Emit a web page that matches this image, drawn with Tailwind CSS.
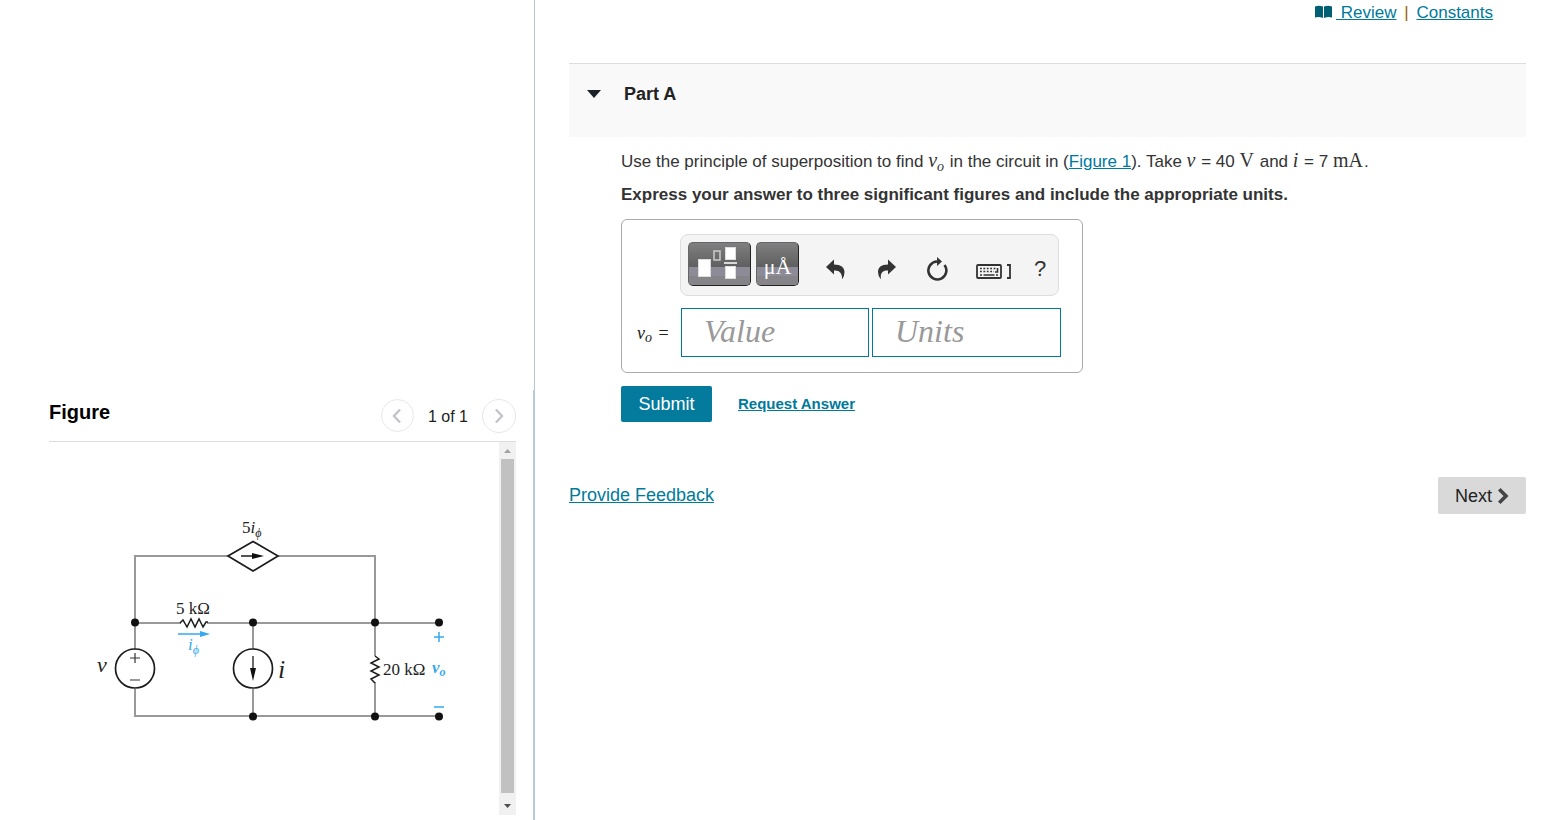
<!DOCTYPE html>
<html lang="en">
<head>
    <meta charset="UTF-8">
    <meta name="viewport" content="width=device-width, initial-scale=1.0">
    <title>Part A</title>
    <script src="https://cdn.jsdelivr.net/npm/@tailwindcss/browser@4"></script>
</head>
<body class="bg-white text-[#333] text-[17px] leading-6 font-['Liberation_Sans',Arial,sans-serif]">
    <div class="grid grid-cols-[535px_1fr] min-h-screen">

        <!-- Left column: figure viewer -->
        <aside class="flex flex-col h-screen">
            <div class="h-[390px] shrink-0 border-r border-[#b9c8d3]"></div>
            <section class="flex-1 min-h-0 flex flex-col border-r-2 border-[#b9cadb] pl-[49px] pr-[17px] pb-[5px]">
                <header class="h-[52px] shrink-0 flex items-center justify-between border-b border-[#ddd]">
                    <h2 class="text-[20px] font-bold text-black pb-2">Figure</h2>
                    <div class="flex items-center">
                        <button type="button" aria-label="Previous figure" class="size-[33px] rounded-full border border-[#e8e8e8] flex items-center justify-center pr-0.5">
                            <svg class="size-4" viewBox="0 0 16 16" fill="none" stroke="#c4c4c8" stroke-width="2.4"><path d="M11 1.5 5 8l6 6.5"/></svg>
                        </button>
                        <span class="w-[68px] text-center text-[16px] pt-0.5 text-[#222]">1 of 1</span>
                        <button type="button" aria-label="Next figure" class="size-[34px] rounded-full border border-[#e8e8e8] flex items-center justify-center">
                            <svg class="size-4" viewBox="0 0 16 16" fill="none" stroke="#c4c4c8" stroke-width="2.4"><path d="M5 1.5 11 8l-6 6.5"/></svg>
                        </button>
                    </div>
                </header>
                <div class="flex-1 min-h-0 flex">
                    <div class="flex-1 overflow-hidden">
                        <svg class="w-[450px] h-[373px] font-['Liberation_Serif','Times_New_Roman',serif]" viewBox="0 0 450 373" role="img" aria-label="Circuit">
                            <!-- wires -->
                            <g fill="none" stroke="#999" stroke-width="2">
                                <path d="M179 114H86V207M86 247V274H390"/>
                                <path d="M229 114H326V214M326 240V274"/>
                                <path d="M86 181H132M158 181H390"/>
                                <path d="M204 181V207M204 247V274"/>
                            </g>
                            <!-- sources and resistors -->
                            <g fill="none" stroke="#1c1c1c" stroke-width="1.7">
                                <circle cx="86" cy="226.5" r="19.5"/>
                                <circle cx="204" cy="226.5" r="19.5"/>
                                <path d="M179 114 204 99.5 229 114 204 129Z"/>
                                <path d="M131 181l3-3 4 7 4-8 4 8 4-8 4 8 3-5h2" stroke-width="1.5"/>
                                <path d="M326 214l4 3-8 4 8 4-8 4 8 4-8 4 4 4" stroke-width="1.5"/>
                                <path d="M192 114h12M204 214v13" stroke-width="1.3"/>
                            </g>
                            <g stroke="#333" stroke-width="1.2">
                                <path d="M81 216h10M86 211v10M81 238h10"/>
                            </g>
                            <g fill="#111">
                                <path d="M203 111 215 114 203 117Z"/>
                                <path d="M201 226h6L204 239Z"/>
                                <circle cx="86" cy="180.5" r="4"/>
                                <circle cx="204" cy="180.5" r="4"/>
                                <circle cx="326" cy="180.5" r="4"/>
                                <circle cx="390" cy="180.5" r="4"/>
                                <circle cx="204" cy="274.5" r="4"/>
                                <circle cx="326" cy="274.5" r="4"/>
                                <circle cx="390" cy="274.5" r="4"/>
                            </g>
                            <g stroke="#34a9ee" stroke-width="1.5">
                                <path d="M129 192h24M385 195h10M390 190v10M385 265h10"/>
                                <path d="M151 189 161 192 151 195Z" fill="#34a9ee" stroke="none"/>
                            </g>
                            <!-- labels -->
                            <g fill="#222" font-size="17">
                                <text x="193" y="91">5<tspan font-style="italic">i</tspan><tspan font-style="italic" font-size="12" dy="4">ϕ</tspan></text>
                                <text x="127" y="172">5 kΩ</text>
                                <text x="334" y="233">20 kΩ</text>
                                <text x="48" y="230" font-style="italic" font-size="22">v</text>
                                <text x="229" y="236" font-style="italic" font-size="26">i</text>
                            </g>
                            <g fill="#34a9ee" font-style="italic" font-size="17">
                                <text x="139" y="208">i<tspan font-size="12" dy="4">ϕ</tspan></text>
                                <text x="383" y="231" font-weight="bold">v<tspan font-size="12" dy="3">o</tspan></text>
                            </g>
                        </svg>
                    </div>
                    <!-- scrollbar -->
                    <div class="w-[17px] bg-[#f1f1f1] flex flex-col items-center">
                        <svg class="w-[17px] h-[17px] shrink-0" viewBox="0 0 17 17" fill="#a3a3a3"><path d="M5 11h7L8.5 7Z"/></svg>
                        <div class="w-[13px] flex-1 bg-[#c1c1c1]"></div>
                        <svg class="w-[17px] h-[22px] shrink-0" viewBox="0 0 17 22" fill="#505050"><path d="M5 11h7L8.5 15Z"/></svg>
                    </div>
                </div>
            </section>
        </aside>

        <!-- Right column: question -->
        <main class="pl-[34px] pr-9">
            <nav class="h-[63px] pt-px pr-[33px] flex justify-end items-start text-[#007a9c]">
                <svg class="w-[17px] h-[14px] mt-1 mr-1" viewBox="0 0 17 14" fill="#005f73"><path d="M0 1.5Q4 0 8 1.5V13Q4 11.5 0 12.5ZM9 1.5Q13 0 17 1.5V12.5Q13 11.5 9 13Z"/></svg>
                <a href="#" class="underline whitespace-pre"> Review</a>
                <span class="w-5 text-center text-[#a35f00]">|</span>
                <a href="#" class="underline">Constants</a>
            </nav>

            <header class="h-[74px] bg-[#f9f9f9] border-t border-[#ddd] pt-[18px] pl-[18px]">
                <button type="button" class="flex items-center text-[18px] font-bold text-[#222]">
                    <svg class="w-[14px] h-2 mr-[23px]" viewBox="0 0 14 8" fill="#1c2328"><path d="M0 0H14L7 8Z"/></svg>
                    Part A
                </button>
            </header>

            <section class="pl-[52px] pt-[13px]">
                <p>Use the principle of superposition to find <i class="mr-px font-['Liberation_Serif',serif] text-[20px] leading-none">v<sub class="text-[14px]">o</sub></i> in the circuit in (<a href="#" class="underline text-[#007a9c]">Figure 1</a>). Take <i class="mr-px font-['Liberation_Serif',serif] text-[20px] leading-none">v</i> = 40 <span class="mr-px font-['Liberation_Serif',serif] text-[20px] leading-none">V</span> and <i class="mr-px font-['Liberation_Serif',serif] text-[20px] leading-none">i</i> = 7 <span class="mr-px font-['Liberation_Serif',serif] text-[20px] leading-none">mA</span>.</p>
                <p class="mt-[9px] font-bold">Express your answer to three significant figures and include the appropriate units.</p>

                <form>
                    <div class="mt-3 w-[462px] h-[154px] border border-[#aaa] rounded-[6px] pt-[14px] pl-[15px]">
                        <div class="ml-[43px] w-[379px] h-[62px] bg-[#f4f4f4] border border-[#ddd] rounded-[8px] flex items-start pt-[7px] pl-[7px]">
                            <button type="button" aria-label="Templates" class="w-[63px] h-11 rounded-[5px] border border-[#666] border-r-[#222] border-b-[#222] bg-linear-to-b from-[#808082] from-0% to-[#606060] to-55% overflow-hidden">
                                <svg class="w-[61px] h-[42px]" viewBox="0 0 61 42">
                                    <path d="M0 24H61V42H0Z" fill="#8d8b97"/>
                                    <path d="M0 33H61V42H0Z" fill="#858489"/>
                                    <g fill="#fff" stroke="#ddd">
                                        <rect x="9.5" y="16.5" width="12" height="17"/>
                                        <rect x="36.5" y="4.5" width="10" height="12"/>
                                        <rect x="36.5" y="23.5" width="10" height="12"/>
                                        <rect x="25" y="8" width="6" height="9" fill="none" stroke="#ccc" stroke-width="1.5"/>
                                        <path d="M35 20H48" stroke="#fff" stroke-width="1.5"/>
                                    </g>
                                </svg>
                            </button>
                            <button type="button" aria-label="Units and symbols" class="ml-[5px] w-[43px] h-11 rounded-[5px] border border-[#666] border-r-[#222] border-b-[#222] bg-linear-to-b from-[#808082] from-0% to-[#606060] to-55% overflow-hidden">
                                <svg class="w-[41px] h-[42px]" viewBox="0 0 41 42">
                                    <path d="M0 24H41V42H0Z" fill="#8d8b97"/>
                                    <path d="M0 33H41V42H0Z" fill="#858489"/>
                                    <text x="20.5" y="31" text-anchor="middle" fill="#fff" font-size="22" font-family="Liberation Serif, serif">μÅ</text>
                                </svg>
                            </button>
                            <button type="button" aria-label="Undo" class="ml-[27px] mt-[17px]">
                                <svg class="w-5 h-5" viewBox="0 0 20 20" fill="#333"><path d="M0 8 8 .5V5.500C15 5.500 18.500 8.500 18.500 13Q18.500 17 16 20.500C16.500 15 14 11 8 11.500V15.500Z"/></svg>
                            </button>
                            <button type="button" aria-label="Redo" class="ml-[31px] mt-[17px]">
                                <svg class="w-5 h-5" viewBox="0 0 20 20" fill="#333"><path d="M19 8 11 .5V5.500C4 5.500 1 8.500 1 13Q1 17 4 20.500C3 15 5 11 11 11.500V15.500Z"/></svg>
                            </button>
                            <button type="button" aria-label="Reset" class="ml-[29px] mt-[15px]">
                                <svg class="w-[22px] h-6" viewBox="0 0 22 24"><path d="M11 4.500A9 9 0 1 0 18.500 8" fill="none" stroke="#333" stroke-width="2.6"/><path d="M11 0 16 4.500 11 9Z" fill="#333"/></svg>
                            </button>
                            <button type="button" aria-label="Keyboard shortcuts" class="ml-7 mt-[22px]">
                                <svg class="w-9 h-4" viewBox="0 0 36 16" fill="none" stroke="#333">
                                    <rect x="1" y="1" width="24" height="13" rx="1" stroke-width="1.8"/>
                                    <path d="M4 4.500H20M4 7.500H18" stroke-width="1.6" stroke-dasharray="1.8 1.6"/>
                                    <path d="M4 11H6M7.500 11H18.500M20 11H22M21.500 4V8H19" stroke-width="1.6"/>
                                    <path d="M31 1H34V14H31" stroke-width="1.8"/>
                                </svg>
                            </button>
                            <button type="button" aria-label="Help" class="ml-[22px] mt-[15px] text-[22px] leading-6">?</button>
                        </div>
                        <div class="flex items-center mt-3">
                            <label for="value" class="w-11 font-['Liberation_Serif',serif] text-[#222] text-[18px]"><i class="mr-0.5">v<sub class="text-[14px]">o</sub></i> =</label>
                            <input id="value" type="text" placeholder="Value" class="w-[188px] h-[49px] border border-[#007a9c] px-[22px] pb-0.5 font-['Liberation_Serif',serif] italic text-[32px] placeholder:text-[#999]">
                            <input id="units" type="text" aria-label="Units" placeholder="Units" class="ml-[3px] w-[189px] h-[49px] border border-[#007a9c] px-[22px] pb-0.5 font-['Liberation_Serif',serif] italic text-[32px] placeholder:text-[#999]">
                        </div>
                    </div>
                    <div class="mt-[13px] flex items-center">
                        <button type="submit" class="w-[91px] h-9 rounded-[2px] bg-[#047a9c] text-white text-[18px]">Submit</button>
                        <a href="#" class="ml-[26px] text-[15px] font-bold underline text-[#007a9c]">Request Answer</a>
                    </div>
                </form>
            </section>

            <footer class="mt-[55px] flex items-center justify-between text-[18px]">
                <a href="#" class="pb-0.5 underline text-[#007a9c]">Provide Feedback</a>
                <button type="button" class="w-[88px] h-[37px] rounded-[2px] bg-[#d9d9d9] text-[#222] flex items-center justify-center gap-[5px]">
                    Next
                    <svg class="w-3 h-4" viewBox="0 0 12 16" fill="#444"><path d="M1 2.500 3.500 0 11.500 8 3.500 16 1 13.500 6.500 8Z"/></svg>
                </button>
            </footer>
        </main>
    </div>
</body>
</html>
